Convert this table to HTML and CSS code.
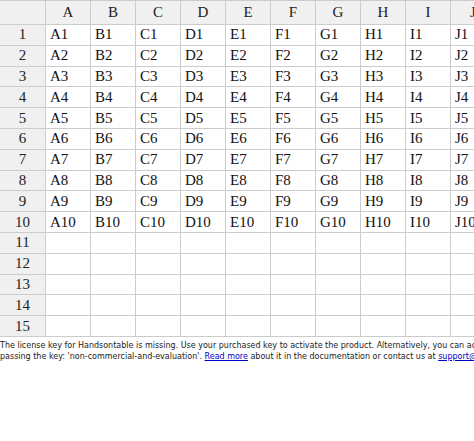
FILE: index.html
```html
<!DOCTYPE html>
<html>
<head>
<meta charset="utf-8">
<link rel="stylesheet" href="styles.css">
</head>
<body>
<div class="wrap">
  <div class="grid" id="grid">
    <div class="corner"></div>
    <div class="colhead">A</div><div class="colhead">B</div><div class="colhead">C</div><div class="colhead">D</div><div class="colhead">E</div><div class="colhead">F</div><div class="colhead">G</div><div class="colhead">H</div><div class="colhead">I</div><div class="colhead">J</div>
    <div class="rowhead">1</div><div class="cell">A1</div><div class="cell">B1</div><div class="cell">C1</div><div class="cell">D1</div><div class="cell">E1</div><div class="cell">F1</div><div class="cell">G1</div><div class="cell">H1</div><div class="cell">I1</div><div class="cell">J1</div>
    <div class="rowhead">2</div><div class="cell">A2</div><div class="cell">B2</div><div class="cell">C2</div><div class="cell">D2</div><div class="cell">E2</div><div class="cell">F2</div><div class="cell">G2</div><div class="cell">H2</div><div class="cell">I2</div><div class="cell">J2</div>
    <div class="rowhead">3</div><div class="cell">A3</div><div class="cell">B3</div><div class="cell">C3</div><div class="cell">D3</div><div class="cell">E3</div><div class="cell">F3</div><div class="cell">G3</div><div class="cell">H3</div><div class="cell">I3</div><div class="cell">J3</div>
    <div class="rowhead">4</div><div class="cell">A4</div><div class="cell">B4</div><div class="cell">C4</div><div class="cell">D4</div><div class="cell">E4</div><div class="cell">F4</div><div class="cell">G4</div><div class="cell">H4</div><div class="cell">I4</div><div class="cell">J4</div>
    <div class="rowhead">5</div><div class="cell">A5</div><div class="cell">B5</div><div class="cell">C5</div><div class="cell">D5</div><div class="cell">E5</div><div class="cell">F5</div><div class="cell">G5</div><div class="cell">H5</div><div class="cell">I5</div><div class="cell">J5</div>
    <div class="rowhead">6</div><div class="cell">A6</div><div class="cell">B6</div><div class="cell">C6</div><div class="cell">D6</div><div class="cell">E6</div><div class="cell">F6</div><div class="cell">G6</div><div class="cell">H6</div><div class="cell">I6</div><div class="cell">J6</div>
    <div class="rowhead">7</div><div class="cell">A7</div><div class="cell">B7</div><div class="cell">C7</div><div class="cell">D7</div><div class="cell">E7</div><div class="cell">F7</div><div class="cell">G7</div><div class="cell">H7</div><div class="cell">I7</div><div class="cell">J7</div>
    <div class="rowhead">8</div><div class="cell">A8</div><div class="cell">B8</div><div class="cell">C8</div><div class="cell">D8</div><div class="cell">E8</div><div class="cell">F8</div><div class="cell">G8</div><div class="cell">H8</div><div class="cell">I8</div><div class="cell">J8</div>
    <div class="rowhead">9</div><div class="cell">A9</div><div class="cell">B9</div><div class="cell">C9</div><div class="cell">D9</div><div class="cell">E9</div><div class="cell">F9</div><div class="cell">G9</div><div class="cell">H9</div><div class="cell">I9</div><div class="cell">J9</div>
    <div class="rowhead">10</div><div class="cell">A10</div><div class="cell">B10</div><div class="cell">C10</div><div class="cell">D10</div><div class="cell">E10</div><div class="cell">F10</div><div class="cell">G10</div><div class="cell">H10</div><div class="cell">I10</div><div class="cell">J10</div>
    <div class="rowhead">11</div><div class="cell"></div><div class="cell"></div><div class="cell"></div><div class="cell"></div><div class="cell"></div><div class="cell"></div><div class="cell"></div><div class="cell"></div><div class="cell"></div><div class="cell"></div>
    <div class="rowhead">12</div><div class="cell"></div><div class="cell"></div><div class="cell"></div><div class="cell"></div><div class="cell"></div><div class="cell"></div><div class="cell"></div><div class="cell"></div><div class="cell"></div><div class="cell"></div>
    <div class="rowhead">13</div><div class="cell"></div><div class="cell"></div><div class="cell"></div><div class="cell"></div><div class="cell"></div><div class="cell"></div><div class="cell"></div><div class="cell"></div><div class="cell"></div><div class="cell"></div>
    <div class="rowhead">14</div><div class="cell"></div><div class="cell"></div><div class="cell"></div><div class="cell"></div><div class="cell"></div><div class="cell"></div><div class="cell"></div><div class="cell"></div><div class="cell"></div><div class="cell"></div>
    <div class="rowhead">15</div><div class="cell"></div><div class="cell"></div><div class="cell"></div><div class="cell"></div><div class="cell"></div><div class="cell"></div><div class="cell"></div><div class="cell"></div><div class="cell"></div><div class="cell"></div>
  </div>
  <div class="notice">The license key for Handsontable is missing. Use your purchased key to activate the product. Alternatively, you can activate Handsontable to use for non-commercial purposes by<br>passing the key: 'non-commercial-and-evaluation'. <a href="#">Read more</a> about it in the documentation or contact us at <a href="#">support@handsontable.com</a>.</div>
</div>
</body>
</html>
```
FILE: styles.css
```css
html, body {
  margin: 0;
  padding: 0;
  background: #fff;
  overflow: hidden;
}
.wrap {
  width: 474px;
  overflow: hidden;
}
.grid {
  display: grid;
  grid-template-columns: 46px repeat(10, 45px);
  grid-template-rows: 25px repeat(15, 20.8px);
  width: 496px;
  font-family: "Liberation Serif", "Times New Roman", serif;
  font-size: 15px;
  color: #111;
}
.grid > div {
  box-sizing: border-box;
  border-right: 1px solid #ccc;
  border-bottom: 1px solid #ccc;
  display: flex;
  align-items: center;
  white-space: nowrap;
  overflow: hidden;
}
.corner, .colhead {
  background: #f0f0f0;
  border-top: 1px solid #ccc;
}
.colhead {
  justify-content: center;
  color: #222;
}
.rowhead {
  background: #f0f0f0;
  justify-content: center;
  color: #222;
}
.cell {
  padding-left: 4px;
  background: #fff;
}
.notice {
  font-family: "DejaVu Sans", Verdana, sans-serif;
  font-size: 8px;
  line-height: 11px;
  color: #222;
  white-space: nowrap;
  padding-top: 3px;
}
.notice a {
  color: #0000cc;
  text-decoration: underline;
}
```
